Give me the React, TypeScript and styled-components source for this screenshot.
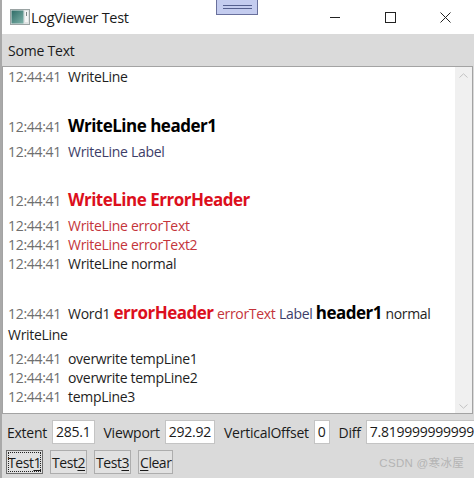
import { createGlobalStyle, styled } from "styled-components";

const GlobalStyle = createGlobalStyle`
  html, body {
    margin: 0;
    padding: 0;
    background: #ffffff;
  }
  body {
    font-family: "Open Sans", "Noto Sans", "Liberation Sans", sans-serif;
  }
`;

const Window = styled.div`
  position: relative;
  width: 474px;
  height: 478px;
  box-sizing: border-box;
  border-left: 2px solid #a9a9a9;
  display: flex;
  flex-direction: column;
  overflow: hidden;
  background: #dadada;
`;

const TitleBar = styled.div`
  height: 34px;
  flex: none;
  background: #ffffff;
  display: flex;
  align-items: center;
  padding-left: 8px;
`;

const Title = styled.span`
  font-size: 14.5px;
  letter-spacing: -0.3px;
  color: #1a1a1a;
  margin-left: 1px;
  margin-top: 1px;
`;

const Captions = styled.div`
  margin-left: auto;
  display: flex;
  height: 100%;
  padding-right: 1px;
`;

const CaptionButton = styled.div`
  width: 55px;
  height: 100%;
  display: flex;
  align-items: center;
  justify-content: center;
`;

const DebugTab = styled.div`
  position: absolute;
  left: 214px;
  top: 0;
  width: 40px;
  height: 14px;
  background: #c4ccef;
  border: 1px solid #69709c;
  border-top: none;
  display: flex;
  flex-direction: column;
  justify-content: center;
  align-items: center;
  gap: 2px;
`;

const DebugLine = styled.div`
  width: 29px;
  height: 1px;
  background: #555f8e;
`;

const MenuBand = styled.div`
  height: 32px;
  flex: none;
  display: flex;
  align-items: center;
  padding-left: 6px;
  font-size: 14px;
  letter-spacing: -0.2px;
  color: #1a1a1a;
  background: #dadada;
`;

const LogFrame = styled.div`
  flex: 1;
  display: flex;
  min-height: 0;
  background: #ffffff;
  border: 1px solid #a3a3a3;
  margin-right: 1px;
`;

const LogContent = styled.div`
  flex: 1;
  padding: 0 4px 0 5px;
  overflow: hidden;
`;

const ScrollBar = styled.div`
  width: 17px;
  flex: none;
  background: #f0f0f0;
  display: flex;
  flex-direction: column;
  justify-content: space-between;
  align-items: center;
  padding: 6px 0 4px;
  box-sizing: border-box;
`;

const Line = styled.div<{ $top?: number; $bottom?: number }>`
  padding: ${(p) => p.$top ?? 0}px 0 ${(p) => p.$bottom ?? 0}px;
  font-size: 14px;
  line-height: 19px;
  letter-spacing: -0.3px;
  color: #1e1e1e;
`;

const Blank = styled.div`
  height: 19px;
`;

const Time = styled.span`
  color: #6e6e6e;
  margin-right: 7px;
`;

type Kind = "normal" | "header" | "label" | "errorHeader" | "errorText";

const kindColor: Record<Kind, string> = {
  normal: "#1e1e1e",
  header: "#000000",
  label: "#3d3d68",
  errorHeader: "#dc0f1d",
  errorText: "#c4343b",
};

const Msg = styled.span<{ $kind: Kind }>`
  color: ${(p) => kindColor[p.$kind]};
  ${(p) =>
    p.$kind === "header" || p.$kind === "errorHeader"
      ? "font-size: 17px; font-weight: 700; line-height: 24px; letter-spacing: -0.5px;"
      : ""}
`;

const BottomPanel = styled.div`
  position: relative;
  height: 64px;
  flex: none;
  background: #dadada;
  padding-top: 6px;
  box-sizing: border-box;
  display: flex;
  flex-direction: column;
  gap: 6px;
`;

const FieldRow = styled.div`
  display: flex;
  align-items: center;
  gap: 9px;
  padding-left: 5px;
  white-space: nowrap;
  font-size: 14px;
  letter-spacing: -0.25px;
  color: #1a1a1a;
`;

const Field = styled.label`
  display: flex;
  align-items: center;
  gap: 5px;
`;

const TextBox = styled.span`
  background: #ffffff;
  border: 1px solid #c4c4c4;
  height: 22px;
  line-height: 22px;
  padding: 0 3px;
  color: #1a1a1a;
`;

const ButtonRow = styled.div`
  display: flex;
  gap: 7px;
  padding-left: 4px;
`;

const Button = styled.button<{ $focused?: boolean }>`
  position: relative;
  height: 24px;
  padding: 0 1px;
  font-family: inherit;
  font-size: 14px;
  letter-spacing: -0.45px;
  color: #1a1a1a;
  background: #e1e1e1;
  border: 1px solid ${(p) => (p.$focused ? "#6e6e6e" : "#adadad")};
  border-radius: 0;
  line-height: 19px;
  &::after {
    content: "";
    display: ${(p) => (p.$focused ? "block" : "none")};
    position: absolute;
    inset: 1px;
    border: 1px dotted #222222;
  }
`;

const AccessKey = styled.span`
  text-decoration: underline;
  text-underline-offset: 2px;
`;

const Watermark = styled.div`
  position: absolute;
  right: 10px;
  bottom: 8px;
  font-size: 11.5px;
  color: #b4b4b4;
  font-family: "Liberation Sans", "Noto Sans CJK SC", sans-serif;
  letter-spacing: 0.3px;
`;

const AppIcon = () => (
  <svg width="20" height="16" viewBox="0 0 20 16">
    <defs>
      <linearGradient id="ic" x1="0" y1="0" x2="1" y2="1">
        <stop offset="0" stopColor="#2e6b66" />
        <stop offset="1" stopColor="#7fb3aa" />
      </linearGradient>
    </defs>
    <rect x="0.5" y="0.5" width="19" height="15" fill="#dfe3e3" stroke="#9aa3a3" />
    <rect x="1.5" y="1.5" width="12" height="13" fill="url(#ic)" />
    <rect x="15" y="2" width="3" height="11" fill="#f4f6f6" />
    <rect x="16" y="3" width="1" height="4" fill="#7b8585" />
  </svg>
);

const ChevronUp = () => (
  <svg width="9" height="5" viewBox="0 0 9 5">
    <path d="M0.5 4.5 L4.5 0.8 L8.5 4.5" fill="none" stroke="#c2c2c2" strokeWidth="1" />
  </svg>
);

const ChevronDown = () => (
  <svg width="9" height="5" viewBox="0 0 9 5">
    <path d="M0.5 0.5 L4.5 4.2 L8.5 0.5" fill="none" stroke="#c2c2c2" strokeWidth="1" />
  </svg>
);

const T = "12:44:41";

export default function App() {
  return (
    <>
      <GlobalStyle />
      <Window>
        <TitleBar>
          <AppIcon />
          <Title>LogViewer Test</Title>
          <Captions>
            <CaptionButton>
              <svg width="11" height="11" viewBox="0 0 11 11">
                <path d="M0 5.5 H10" stroke="#222" strokeWidth="1" />
              </svg>
            </CaptionButton>
            <CaptionButton>
              <svg width="11" height="11" viewBox="0 0 11 11">
                <rect x="0.5" y="0.5" width="10" height="10" fill="none" stroke="#222" strokeWidth="1" />
              </svg>
            </CaptionButton>
            <CaptionButton>
              <svg width="11" height="11" viewBox="0 0 11 11">
                <path d="M0.5 0.5 L10.5 10.5 M10.5 0.5 L0.5 10.5" stroke="#222" strokeWidth="1" />
              </svg>
            </CaptionButton>
          </Captions>
        </TitleBar>
        <DebugTab>
          <DebugLine />
          <DebugLine />
        </DebugTab>

        <MenuBand>Some Text</MenuBand>

        <LogFrame>
          <LogContent>
            <Line>
              <Time>{T}</Time>
              <Msg $kind="normal">WriteLine</Msg>
            </Line>
            <Blank />
            <Line $top={9} $bottom={4}>
              <Time>{T}</Time>
              <Msg $kind="header">WriteLine header1</Msg>
            </Line>
            <Line>
              <Time>{T}</Time>
              <Msg $kind="label">WriteLine Label</Msg>
            </Line>
            <Blank />
            <Line $top={8} $bottom={4}>
              <Time>{T}</Time>
              <Msg $kind="errorHeader">WriteLine ErrorHeader</Msg>
            </Line>
            <Line>
              <Time>{T}</Time>
              <Msg $kind="errorText">WriteLine errorText</Msg>
            </Line>
            <Line>
              <Time>{T}</Time>
              <Msg $kind="errorText">WriteLine errorText2</Msg>
            </Line>
            <Line>
              <Time>{T}</Time>
              <Msg $kind="normal">WriteLine normal</Msg>
            </Line>
            <Blank />
            <Line $top={9} $bottom={5}>
              <Time>{T}</Time>
              <Msg $kind="normal">Word1 </Msg>
              <Msg $kind="errorHeader">errorHeader</Msg>{" "}
              <Msg $kind="errorText">errorText</Msg>{" "}
              <Msg $kind="label">Label</Msg>{" "}
              <Msg $kind="header">header1</Msg>{" "}
              <Msg $kind="normal">normal WriteLine</Msg>
            </Line>
            <Line>
              <Time>{T}</Time>
              <Msg $kind="normal">overwrite tempLine1</Msg>
            </Line>
            <Line>
              <Time>{T}</Time>
              <Msg $kind="normal">overwrite tempLine2</Msg>
            </Line>
            <Line>
              <Time>{T}</Time>
              <Msg $kind="normal">tempLine3</Msg>
            </Line>
          </LogContent>
          <ScrollBar>
            <ChevronUp />
            <ChevronDown />
          </ScrollBar>
        </LogFrame>

        <BottomPanel>
          <FieldRow>
            <Field>
              Extent <TextBox>285.1</TextBox>
            </Field>
            <Field>
              Viewport <TextBox>292.92</TextBox>
            </Field>
            <Field>
              VerticalOffset <TextBox>0</TextBox>
            </Field>
            <Field>
              Diff <TextBox>7.8199999999999932</TextBox>
            </Field>
          </FieldRow>
          <ButtonRow>
            <Button $focused>
              Test<AccessKey>1</AccessKey>
            </Button>
            <Button>
              Test<AccessKey>2</AccessKey>
            </Button>
            <Button>
              Test<AccessKey>3</AccessKey>
            </Button>
            <Button>
              <AccessKey>C</AccessKey>lear
            </Button>
          </ButtonRow>
          <Watermark>CSDN @寒冰屋</Watermark>
        </BottomPanel>
      </Window>
    </>
  );
}
